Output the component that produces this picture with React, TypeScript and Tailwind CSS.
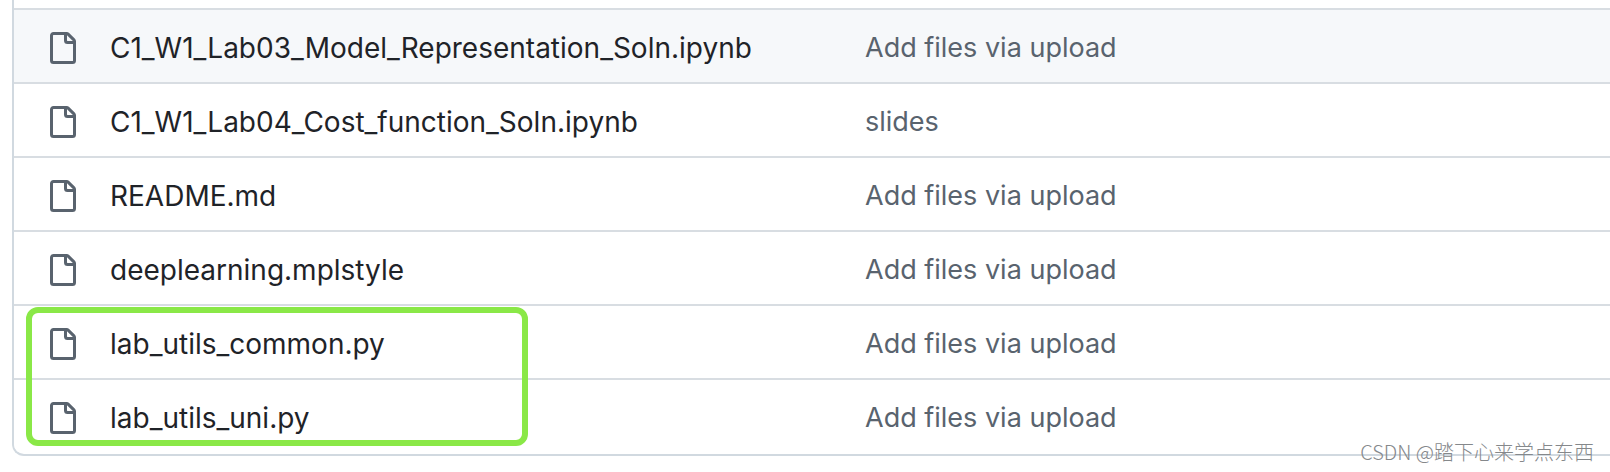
import React from 'react';

type Entry = { name: string; message: string; hovered?: boolean };

const entries: Entry[] = [
  { name: 'C1_W1_Lab03_Model_Representation_Soln.ipynb', message: 'Add files via upload', hovered: true },
  { name: 'C1_W1_Lab04_Cost_function_Soln.ipynb', message: 'slides' },
  { name: 'README.md', message: 'Add files via upload' },
  { name: 'deeplearning.mplstyle', message: 'Add files via upload' },
  { name: 'lab_utils_common.py', message: 'Add files via upload' },
  { name: 'lab_utils_uni.py', message: 'Add files via upload' },
];

function FileIcon() {
  return (
    <svg viewBox="0 0 16 16" className="size-8 shrink-0 fill-[#59636e]" aria-hidden="true">
      <path d="M2 1.75C2 .784 2.784 0 3.75 0h6.586c.464 0 .909.184 1.237.513l2.914 2.914c.329.328.513.773.513 1.237v9.586A1.75 1.75 0 0 1 13.25 16h-9.5A1.75 1.75 0 0 1 2 14.25Zm1.75-.25a.25.25 0 0 0-.25.25v12.5c0 .138.112.25.25.25h9.5a.25.25 0 0 0 .25-.25V6h-2.75A1.75 1.75 0 0 1 9 4.25V1.5Zm6.75.062V4.25c0 .138.112.25.25.25h2.688l-.011-.013-2.914-2.914-.013-.011Z" />
    </svg>
  );
}

function FileRow({ name, message, hovered }: Entry) {
  return (
    <tr className={hovered ? 'bg-[#f6f8fa]' : 'bg-white'}>
      <td className="h-[74px] border-t-2 border-[#d8dde2] p-0 pt-1 pl-8">
        <div className="flex items-center gap-8">
          <FileIcon />
          <a href="#" className="text-[28px] leading-9 whitespace-nowrap text-[#1f2328]">
            {name}
          </a>
        </div>
      </td>
      <td className="border-t-2 border-[#d8dde2] p-0 pt-1">
        <a href="#" className="text-[27px] leading-9 whitespace-nowrap text-[#59636e]">
          {message}
        </a>
      </td>
    </tr>
  );
}

export default function App() {
  return (
    <main className="relative overflow-hidden bg-white pb-4 pl-3 font-['Inter','Liberation_Sans',sans-serif]">
      <div className="overflow-hidden rounded-bl-xl border-b-2 border-l-2 border-[#d1d9e0] pt-2 pb-0.5">
        <table className="w-full table-fixed border-separate border-spacing-0">
          <colgroup>
            <col className="w-[851px]" />
            <col />
          </colgroup>
          <tbody>
            {entries.map((entry) => (
              <FileRow key={entry.name} {...entry} />
            ))}
          </tbody>
        </table>
      </div>

      {/* marker around the two helper scripts */}
      <div className="pointer-events-none absolute bottom-[26px] left-[26px] h-[139px] w-[502px] rounded-xl border-6 border-[#8ae847]" />

      <p className="absolute right-4 bottom-1 font-['Noto_Sans_CJK_SC',sans-serif] text-xl leading-8 font-light text-[#85888b]">
        CSDN @踏下心来学点东西
      </p>
    </main>
  );
}
